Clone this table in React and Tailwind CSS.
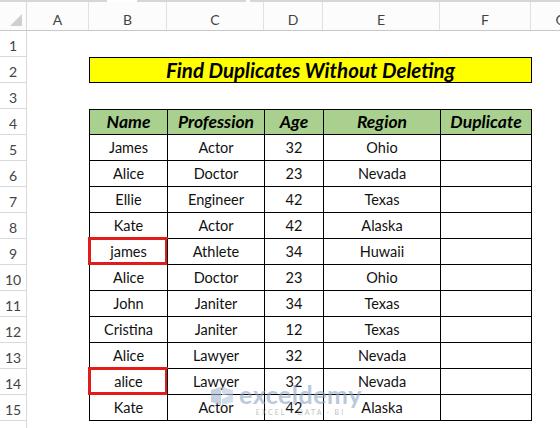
import React from 'react'

const font = "font-['Lato','Open_Sans',sans-serif]"

const rows = [
  ['James', 'Actor', '32', 'Ohio'],
  ['Alice', 'Doctor', '23', 'Nevada'],
  ['Ellie', 'Engineer', '42', 'Texas'],
  ['Kate', 'Actor', '42', 'Alaska'],
  ['james', 'Athlete', '34', 'Huwaii', true],
  ['Alice', 'Doctor', '23', 'Ohio'],
  ['John', 'Janiter', '34', 'Texas'],
  ['Cristina', 'Janiter', '12', 'Texas'],
  ['Alice', 'Lawyer', '32', 'Nevada'],
  ['alice', 'Lawyer', '32', 'Nevada', true],
  ['Kate', 'Actor', '42', 'Alaska'],
]

const widths = ['w-[78px]', 'w-[97px]', 'w-[59px]', 'w-[117px]', 'w-[92px] border-r']

function RowHead({ n }) {
  return (
    <div className="w-[27px] shrink-0 border-r border-b border-[#d9d9d9] flex items-center justify-center pt-[3px] text-[14px] text-[#444]">
      {n}
    </div>
  )
}

function SheetRow({ n, children }) {
  return (
    <div className="flex h-[26px]">
      <RowHead n={n} />
      <div className="w-[62px] shrink-0" />
      {children}
    </div>
  )
}

function Cell({ i, first, highlight, children, header }) {
  return (
    <div
      className={`${widths[i]} shrink-0 relative border-l border-b border-black flex items-center justify-center ${first ? 'border-t' : ''} ${header ? 'bg-[#a9d08e] font-bold italic text-[17.5px]' : 'text-[14.5px] text-[#111]'}`}
    >
      {children}
      {highlight && (
        <div className="absolute -left-[2px] -top-[2px] -right-[1px] -bottom-[1px] border-[3px] border-[#e21b1b]" />
      )}
    </div>
  )
}

function Watermark() {
  return (
    <div className="absolute left-[209px] top-[382px] flex items-start gap-[4px] opacity-60 pointer-events-none">
      <svg width="26" height="20" viewBox="0 0 26 20" className="mt-[4px]">
        <path d="M2 4 L12 1 L12 19 L2 16 Z" fill="#9fb3cf" />
        <path d="M13 1 L24 4 L24 16 L13 19 Z" fill="#b9c9dd" />
        <path d="M13 7 L20 10 L13 13 Z" fill="#ffffff" />
      </svg>
      <div className="flex flex-col items-center leading-none">
        <span className="text-[25px] font-bold text-[#8ea6c8] tracking-[0.5px]">exceldemy</span>
        <span className="text-[7px] text-[#9a9a9a] tracking-[2px] mt-[2px]">EXCEL · DATA · BI</span>
      </div>
    </div>
  )
}

export default function App() {
  return (
    <div className={`w-[560px] h-[428px] bg-white relative overflow-hidden text-black ${font}`}>
      <div className="flex h-[2px]">
        <div className="w-[107px] bg-[#d6d6d6]" />
        <div className="w-[30px]" />
        <div className="w-[109px] bg-[#d6d6d6]" />
        <div className="w-[4px]" />
        <div className="flex-1 bg-[#d6d6d6]" />
      </div>
      <div className="flex h-[29px] border-b border-[#c8c8c8] text-[14px] text-[#444] bg-[#fcfcfc]">
        <div className="w-[27px] shrink-0 border-r border-[#d9d9d9] relative">
          <div className="absolute right-[4px] bottom-[4px] w-0 h-0 border-l-[12px] border-l-transparent border-b-[12px] border-b-[#cfcfcf]" />
        </div>
        {[
          ['A', 'w-[62px]'],
          ['B', 'w-[78px]'],
          ['C', 'w-[97px]'],
          ['D', 'w-[59px]'],
          ['E', 'w-[117px]'],
          ['F', 'w-[91px]'],
          ['G', 'w-[60px]'],
        ].map(([l, w]) => (
          <div key={l} className={`${w} shrink-0 border-r border-[#e0e0e0] flex items-center justify-center pt-[7px]`}>
            {l}
          </div>
        ))}
      </div>

      <SheetRow n={1} />
      <SheetRow n={2}>
        <div className="w-[443px] shrink-0 border border-black bg-[#ffff00] flex items-center justify-center font-bold italic text-[20.5px]">
          Find Duplicates Without Deleting
        </div>
      </SheetRow>
      <SheetRow n={3} />
      <SheetRow n={4}>
        {['Name', 'Profession', 'Age', 'Region', 'Duplicate'].map((h, i) => (
          <Cell key={h} i={i} first header>
            {h}
          </Cell>
        ))}
      </SheetRow>
      {rows.map((r, idx) => (
        <SheetRow key={idx} n={idx + 5}>
          <Cell i={0} highlight={r[4]}>{r[0]}</Cell>
          <Cell i={1}>{r[1]}</Cell>
          <Cell i={2}>{r[2]}</Cell>
          <Cell i={3}>{r[3]}</Cell>
          <Cell i={4} />
        </SheetRow>
      ))}
      <SheetRow />
      <Watermark />
    </div>
  )
}
